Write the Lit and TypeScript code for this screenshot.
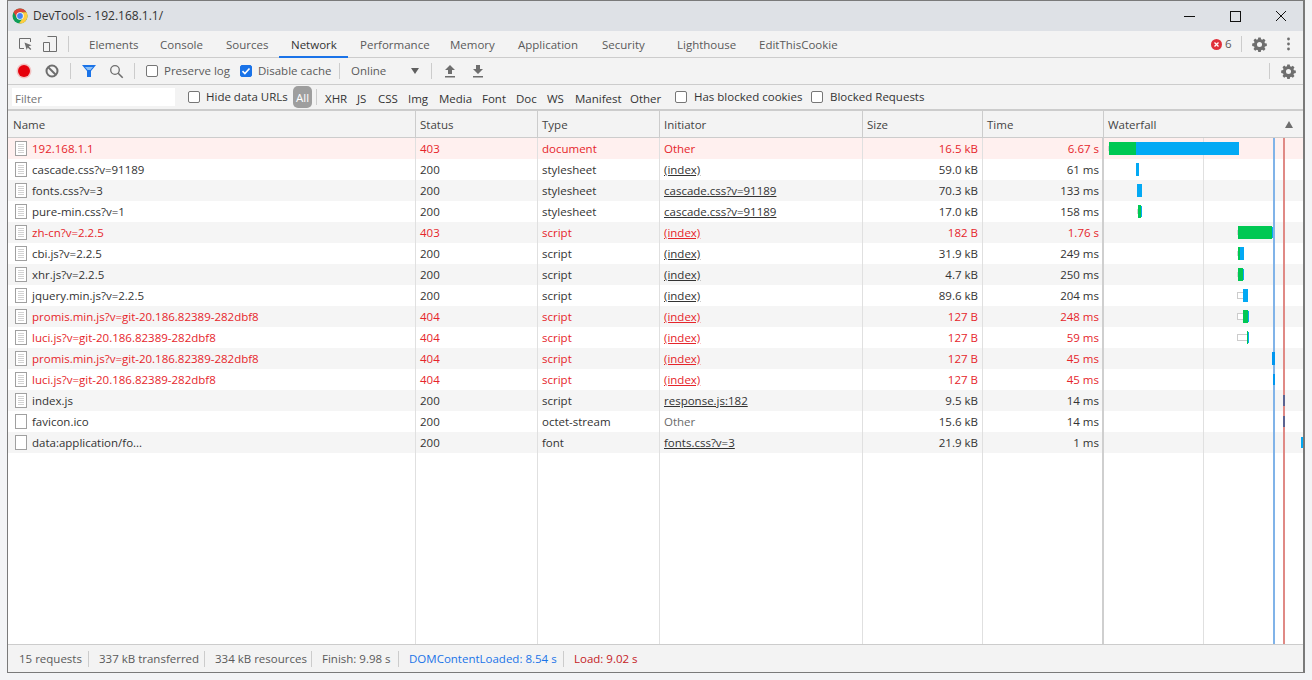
import { LitElement, html, css, svg } from "lit";
import { customElement } from "lit/decorators.js";

const W = (n: number) => `width:${n}px`;
const tabs: [string, number][] = [["Elements",71],["Console",66],["Sources",65],["Network",69],["Performance",90],["Memory",68],["Application",84],["Security",75],["Lighthouse",82],["EditThisCookie",90]];
const types: [string, number][] = [["XHR",32],["JS",21],["CSS",30],["Img",31],["Media",43],["Font",34],["Doc",31],["WS",28],["Manifest",55],["Other",36]];
const G = "#00c853", B = "#03a9f4";
type Seg = { x: number; w: number; c: string; s?: boolean };
type R = { n: string; st: string; ty: string; in: string; u?: boolean; sz: string; t: string; err?: boolean; tick?: number; box?: [number, number]; segs: Seg[]; ico?: "doc" | "blank"; dim?: boolean };
const rows: R[] = [
 {n:"192.168.1.1",st:"403",ty:"document",in:"Other",sz:"16.5 kB",t:"6.67 s",err:true,tick:1108,segs:[{x:1109,w:27,c:G},{x:1136,w:103,c:B}]},
 {n:"cascade.css?v=91189",st:"200",ty:"stylesheet",in:"(index)",u:true,sz:"59.0 kB",t:"61 ms",segs:[{x:1136,w:3,c:B}]},
 {n:"fonts.css?v=3",st:"200",ty:"stylesheet",in:"cascade.css?v=91189",u:true,sz:"70.3 kB",t:"133 ms",segs:[{x:1137,w:5,c:B}]},
 {n:"pure-min.css?v=1",st:"200",ty:"stylesheet",in:"cascade.css?v=91189",u:true,sz:"17.0 kB",t:"158 ms",tick:1137,segs:[{x:1141,w:1,c:B,s:true},{x:1138,w:3,c:G}]},
 {n:"zh-cn?v=2.2.5",st:"403",ty:"script",in:"(index)",u:true,sz:"182 B",t:"1.76 s",err:true,tick:1237,segs:[{x:1272,w:1,c:B,s:true},{x:1238,w:34,c:G}]},
 {n:"cbi.js?v=2.2.5",st:"200",ty:"script",in:"(index)",u:true,sz:"31.9 kB",t:"249 ms",tick:1237,segs:[{x:1238,w:2,c:G},{x:1240,w:4,c:B}]},
 {n:"xhr.js?v=2.2.5",st:"200",ty:"script",in:"(index)",u:true,sz:"4.7 kB",t:"250 ms",tick:1237,segs:[{x:1243,w:1,c:B,s:true},{x:1238,w:5,c:G}]},
 {n:"jquery.min.js?v=2.2.5",st:"200",ty:"script",in:"(index)",u:true,sz:"89.6 kB",t:"204 ms",box:[1237,6],segs:[{x:1243,w:5,c:B}]},
 {n:"promis.min.js?v=git-20.186.82389-282dbf8",st:"404",ty:"script",in:"(index)",u:true,sz:"127 B",t:"248 ms",err:true,box:[1237,6],segs:[{x:1248,w:1,c:B,s:true},{x:1243,w:5,c:G}]},
 {n:"luci.js?v=git-20.186.82389-282dbf8",st:"404",ty:"script",in:"(index)",u:true,sz:"127 B",t:"59 ms",err:true,box:[1237,10],segs:[{x:1248,w:1,c:B,s:true},{x:1247,w:1,c:G}]},
 {n:"promis.min.js?v=git-20.186.82389-282dbf8",st:"404",ty:"script",in:"(index)",u:true,sz:"127 B",t:"45 ms",err:true,segs:[{x:1272,w:3,c:"#0097f0"}]},
 {n:"luci.js?v=git-20.186.82389-282dbf8",st:"404",ty:"script",in:"(index)",u:true,sz:"127 B",t:"45 ms",err:true,segs:[{x:1273,w:2,c:"#0097f0",s:true}]},
 {n:"index.js",st:"200",ty:"script",in:"response.js:182",u:true,sz:"9.5 kB",t:"14 ms",segs:[{x:1283,w:2,c:"#5b6390",s:true}]},
 {n:"favicon.ico",st:"200",ty:"octet-stream",in:"Other",dim:true,sz:"15.6 kB",t:"14 ms",ico:"blank",segs:[{x:1283,w:2,c:"#5b6390",s:true}]},
 {n:"data:application/fo...",st:"200",ty:"font",in:"fonts.css?v=3",u:true,sz:"21.9 kB",t:"1 ms",ico:"blank",segs:[{x:1301,w:2,c:B,s:true}]},
];
const gear = svg`<path fill="#6e6e6e" fill-rule="evenodd" d="M6.700 0.500h2.600l.4 2 1.200.5 1.700-1.100 1.800 1.800-1.100 1.700.5 1.200 2 .4v2.600l-2 .4-.5 1.200 1.100 1.700-1.800 1.800-1.700-1.100-1.200.5-.4 2H6.700l-.4-2-1.200-.5-1.700 1.100-1.800-1.800 1.100-1.700-.5-1.200-2-.4V6.800l2-.4.5-1.200L1.600 3.500l1.800-1.800 1.700 1.100 1.200-.5zM8 5.300a2.700 2.700 0 1 0 0 5.400 2.700 2.700 0 0 0 0-5.400z"/>`;

@customElement("app-root")
export class AppRoot extends LitElement {
  static styles = css`
    :host { display:block; width:1312px; height:680px; background:#f3f4f6; font:11.5px/16px "Open Sans","Noto Sans",sans-serif; color:#333; overflow:hidden; }
    .win { margin-left:7px; width:1298px; height:673px; box-sizing:border-box; border:1px solid #7a7a7a; border-right-width:2px; display:flex; flex-direction:column; background:#f3f3f3; }
    .title { height:30px; flex:none; background:#dee1e6; display:flex; align-items:center; padding-left:4px; color:#333; font-size:12px; }
    .title svg.logo { flex:none; margin-right:5px; }
    .title .sp { flex:1; }
    .winbtn { display:flex; align-items:center; justify-content:center; width:46px; height:30px; flex:none; }
    .tabs { height:26px; flex:none; display:flex; align-items:center; border-bottom:1px solid #ccc; color:#5a5a5a; }
    .iconbtn { display:flex; align-items:center; justify-content:center; flex:none; }
    .tab { box-sizing:border-box; height:26px; padding:0 0 0 12px; line-height:27px; white-space:nowrap; flex:none; }
    .tab.on { color:#333; border-bottom:2px solid #1a73e8; height:27px; margin-bottom:-1px; }
    .dv { width:1px; height:16px; background:#ccc; flex:none; }
    .tb { height:26px; flex:none; display:flex; align-items:center; border-bottom:1px solid #ccc; color:#5a5a5a; white-space:nowrap; line-height:26px; }
    .cb { width:12px; height:12px; box-sizing:border-box; border:1px solid #767676; border-radius:2px; background:#fff; flex:none; display:flex; }
    .cb.on { background:#1a73e8; border-color:#1a73e8; }
    .fl { height:24px; flex:none; display:flex; align-items:center; color:#333; white-space:nowrap; }
    .inp { width:163px; height:18px; margin-left:4px; background:#fff; color:#757575; line-height:21px; padding-left:3px; box-sizing:border-box; flex:none; }
    .all { width:19px; height:22px; border-radius:5px; background:#9e9e9e; color:#fff; text-align:center; line-height:23px; flex:none; }
    .ty { flex:none; line-height:28px; height:24px; }
    .table { flex:1; min-height:0; position:relative; background:#fff; border-top:2px solid #ccc; display:flex; flex-direction:column; }
    .head, .row { display:grid; grid-template-columns:407px 122px 122px 203px 120px 121px 200px; flex:none; }
    .head { height:26px; background:#f3f3f3; border-bottom:1px solid #ccc; line-height:27px; color:#444; }
    .head > div { padding-left:4px; border-left:1px solid #ccc; position:relative; }
    .head > div:first-child { padding-left:5px; border-left:none; }
    .tri { position:absolute; right:10px; top:10px; width:0; height:0; border:4.500px solid transparent; border-top:0; border-bottom:7px solid #6e6e6e; }
    .row { height:21px; line-height:21px; }
    .row:nth-child(odd) { background:#f5f5f5; }
    .row.first { background:#fff0ef !important; }
    .row > div { padding-left:5px; overflow:hidden; white-space:nowrap; box-sizing:border-box; }
    .row.err { color:#e6252b; }
    .nm { display:flex; align-items:center; gap:5px; padding-left:7px !important; }
    .r { text-align:right; padding-right:4px; padding-left:0 !important; }
    .u { text-decoration:underline; }
    .dim { color:#6a6a6a; }
    .rows { flex:1; min-height:0; }
    .overlay { position:absolute; left:0; right:0; top:27px; bottom:0; display:grid; grid-template-columns:407px 122px 122px 203px 120px 121px 100px 100px; pointer-events:none; }
    .overlay > div { border-left:1px solid #e0e0e0; }
    .overlay > div:first-child { border-left:none; }
    .overlay > div.wf { border-left-color:#cfcfcf; border-left-width:2px; margin-left:-1px; }
    .ln { position:absolute; top:0; bottom:0; width:2px; border-left:none !important; }
    .ln.b { left:1265px; background:#80b3e8; }
    .ln.rd { left:1275px; background:#e08a85; }
    .bar { position:absolute; top:4px; height:13px; }
    .bar.s { top:5px; height:11px; }
    .tick { position:absolute; top:8px; height:5px; width:1px; background:#d5d5d5; }
    .bx { position:absolute; top:7px; height:7px; box-sizing:border-box; border:1px solid #ccc; background:#fff; border-right:none; }
    .wcell { position:relative; overflow:visible !important; padding:0 !important; z-index:1; }
    .foot { height:28px; flex:none; box-sizing:border-box; border-top:1px solid #ccc; display:flex; align-items:center; color:#5a5a5a; white-space:nowrap; background:#f3f3f3; }
    .foot span.i { box-sizing:border-box; padding-left:10px; border-right:1px solid #ccc; height:16px; line-height:16px; flex:none; }
    .foot span.i:first-child { padding-left:11px; }
    .foot span.i:last-child { border-right:none; }
    .blue { color:#1a73e8; } .red { color:#c5221f; }
  `;
  ico(kind?: string) {
    return html`<svg width="12" height="15" viewBox="0 0 12 15" style="flex:none"><rect x=".5" y=".5" width="11" height="14" fill="#fff" stroke="#a0a0a0"/>${kind==="blank"?"":svg`<path stroke="#d2d2d2" d="M3 3.500h6M3 5.500h6M3 7.500h6M3 9.500h6M3 11.500h6"/>`}</svg>`;
  }
  render() {
    return html`<div class="win">
      <div class="title">
        <svg class="logo" width="16" height="16" viewBox="0 0 16 16"><circle cx="8" cy="8" r="7.500" fill="#0f9d58"/><path fill="#db4437" d="M8 4.400H14.500A7.500 7.500 0 0 0 1.500 4.250L4.900 9.800z"/><path fill="#ffcd40" d="M14.500 4.250A7.500 7.500 0 0 1 6.900 15.400L11.100 9.800 8 4.400z"/><circle cx="8" cy="8" r="3.700" fill="#fff"/><circle cx="8" cy="8" r="2.900" fill="#4285f4"/></svg>
        <span>DevTools - 192.168.1.1/</span><span class="sp"></span>
        <span class="winbtn"><svg width="11" height="11"><path d="M0 5.500h11" stroke="#111"/></svg></span>
        <span class="winbtn"><svg width="11" height="11"><rect x=".5" y=".5" width="10" height="10" fill="none" stroke="#111"/></svg></span>
        <span class="winbtn" style="margin-right:-1px"><svg width="12" height="12"><path d="M1 1l10 10M11 1L1 11" stroke="#111"/></svg></span>
      </div>
      <div class="tabs">
        <span class="iconbtn" style="margin-left:9px;width:18px"><svg width="16" height="16" viewBox="0 0 16 16"><path fill="none" stroke="#6e6e6e" d="M6 12.500H1.500v-10h11V6"/><path fill="#6e6e6e" d="M6.500 6.500l7 2.800-2.800 1.100 2.600 2.600-1 1-2.600-2.600-1 2.600z"/></svg></span>
        <span class="iconbtn" style="margin-left:7px;width:16px"><svg width="16" height="18" viewBox="0 0 16 18"><path fill="none" stroke="#6e6e6e" d="M5.500 1.500h9v15h-9M1.500 7.500h6v9h-6z"/></svg></span>
        <span class="dv" style="margin-left:10px"></span>
        <div style="display:flex;margin-left:8px">${tabs.map(([t,w])=>html`<div class="tab ${t==="Network"?"on":""}" style=${W(w)}>${t}</div>`)}</div>
        <span style="flex:1"></span>
        <svg width="11" height="11" viewBox="0 0 11 11" style="flex:none"><circle cx="5.500" cy="5.500" r="5.500" fill="#e0303a"/><path d="M3.500 3.500l4 4M7.500 3.500l-4 4" stroke="#fff" stroke-width="1.300"/></svg>
        <span style="margin-left:3px;color:#5a5a5a;width:15px">6</span>
        <span class="dv" style="margin-left:1px"></span>
        <span class="iconbtn" style="margin-left:10px"><svg width="15" height="15" viewBox="0 0 16 16">${gear}</svg></span>
        <span class="iconbtn" style="margin-left:20px;margin-right:13px"><svg width="3" height="14"><circle cx="1.500" cy="2" r="1.400" fill="#6e6e6e"/><circle cx="1.500" cy="7" r="1.400" fill="#6e6e6e"/><circle cx="1.500" cy="12" r="1.400" fill="#6e6e6e"/></svg></span>
      </div>
      <div class="tb">
        <span class="iconbtn" style="margin-left:8px"><svg width="16" height="16"><circle cx="8" cy="8" r="7.500" fill="#e00" opacity=".2"/><circle cx="8" cy="8" r="6" fill="#e5000b"/></svg></span>
        <span class="iconbtn" style="margin-left:13px"><svg width="14" height="14" viewBox="0 0 14 14"><circle cx="7" cy="7" r="5.500" fill="none" stroke="#6e6e6e" stroke-width="2"/><path d="M3 3l8 8" stroke="#6e6e6e" stroke-width="2"/></svg></span>
        <span class="dv" style="margin-left:11px"></span>
        <span class="iconbtn" style="margin-left:11px"><svg width="14" height="12" viewBox="0 0 14 12"><path fill="#1a73e8" d="M0 0h14L9 6v6H5V6z"/><path fill="#8ec1f5" d="M3 2h8l-2.500 3h-3z"/></svg></span>
        <span class="iconbtn" style="margin-left:13px"><svg width="15" height="15" viewBox="0 0 15 15"><circle cx="6" cy="6" r="4.300" fill="none" stroke="#6e6e6e" stroke-width="1.300"/><path d="M9.200 9.200l4.500 4.500" stroke="#6e6e6e" stroke-width="1.600"/></svg></span>
        <span class="dv" style="margin-left:10px"></span>
        <span class="cb" style="margin-left:11px"></span><span style="margin-left:6px;width:76px">Preserve log</span>
        <span class="cb on"><svg width="10" height="10" viewBox="0 0 10 10"><path d="M1.500 5.200l2.400 2.300 4.600-5" fill="none" stroke="#fff" stroke-width="1.600"/></svg></span><span style="margin-left:6px;width:81px">Disable cache</span>
        <span class="dv"></span>
        <span style="margin-left:11px;width:60px">Online</span>
        <svg width="8" height="6" style="flex:none"><path d="M0 0h8L4 6z" fill="#5f5f5f"/></svg>
        <span class="dv" style="margin-left:12px"></span>
        <span class="iconbtn" style="margin-left:12px"><svg width="12" height="13" viewBox="0 0 12 13"><path fill="#6e6e6e" d="M6 0l5 5H8v4H4V5H1zM1 11h10v1.500H1z"/></svg></span>
        <span class="iconbtn" style="margin-left:16px"><svg width="12" height="13" viewBox="0 0 12 13"><path fill="#6e6e6e" d="M4 0h4v4h3L6 9 1 4h3zM1 11h10v1.500H1z"/></svg></span>
        <span style="flex:1"></span>
        <span class="dv"></span>
        <span class="iconbtn" style="margin-left:11px;margin-right:7px"><svg width="15" height="15" viewBox="0 0 16 16">${gear}</svg></span>
      </div>
      <div class="fl">
        <div class="inp">Filter</div>
        <span class="cb" style="margin-left:13px"></span><span style="margin-left:6px;width:87px">Hide data URLs</span>
        <div class="all">All</div>
        <span class="dv" style="margin-left:4px"></span>
        <div style="display:flex;margin-left:8px">${types.map(([t,w])=>html`<span class="ty" style=${W(w)}>${t}</span>`)}</div>
        <span class="cb" style="margin-left:9px"></span><span style="margin-left:7px;width:117px">Has blocked cookies</span>
        <span class="cb"></span><span style="margin-left:7px">Blocked Requests</span>
      </div>
      <div class="table">
        <div class="head"><div>Name</div><div>Status</div><div>Type</div><div>Initiator</div><div>Size</div><div>Time</div><div>Waterfall<span class="tri"></span></div></div>
        <div class="rows">
        ${rows.map((r,i)=>html`<div class="row ${r.err?"err":""} ${i===0?"first":""}">
          <div class="nm">${this.ico(r.ico)}<span>${r.n}</span></div>
          <div>${r.st}</div><div>${r.ty}</div>
          <div class="${r.u?"u":""} ${r.dim?"dim":""}">${r.in}</div>
          <div class="r">${r.sz}</div><div class="r">${r.t}</div>
          <div class="wcell">
            ${r.tick?html`<div class="tick" style="left:${r.tick-1103}px"></div>`:""}
            ${r.box?html`<div class="bx" style="left:${r.box[0]-1103}px;width:${r.box[1]}px"></div>`:""}
            ${r.segs.map(s=>html`<div class="bar ${s.s?"s":""}" style="left:${s.x-1103}px;width:${s.w}px;background:${s.c}"></div>`)}
          </div>
        </div>`)}
        </div>
        <div class="overlay">
          <div></div><div></div><div></div><div></div><div></div><div></div><div class="wf"></div><div></div>
          <div class="ln b"></div><div class="ln rd"></div>
        </div>
      </div>
      <div class="foot">
        <span class="i" style="width:81px">15 requests</span>
        <span class="i" style="width:116px">337 kB transferred</span>
        <span class="i" style="width:107px">334 kB resources</span>
        <span class="i" style="width:87px">Finish: 9.98 s</span>
        <span class="i blue" style="width:165px">DOMContentLoaded: 8.54 s</span>
        <span class="i red">Load: 9.02 s</span>
      </div>
    </div>`;
  }
}
